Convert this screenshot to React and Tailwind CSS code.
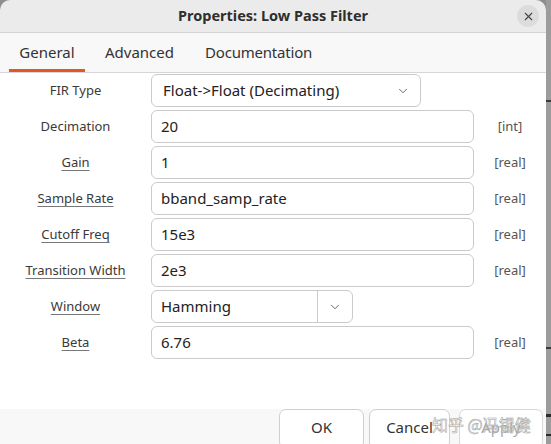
import { ChevronDown, X } from "lucide-react";

const rows = [
  { label: "FIR Type", type: "combo", value: "Float->Float (Decimating)" },
  { label: "Decimation", value: "20", unit: "[int]" },
  { label: "Gain", value: "1", unit: "[real]", u: true },
  { label: "Sample Rate", value: "bband_samp_rate", unit: "[real]", u: true },
  { label: "Cutoff Freq", value: "15e3", unit: "[real]", u: true },
  { label: "Transition Width", value: "2e3", unit: "[real]", u: true },
  { label: "Window", type: "split", value: "Hamming", u: true },
  { label: "Beta", value: "6.76", unit: "[real]", u: true },
];

function Field({ row }) {
  if (row.type === "combo") {
    return (
      <div className="w-[270px] h-[33px] border border-[#cacaca] rounded-[6px] bg-white flex items-center pl-[11px] pr-[10px]">
        <span className="flex-1 text-[15px] text-[#222]">{row.value}</span>
        <ChevronDown size={14} strokeWidth={1.5} className="text-[#555]" />
      </div>
    );
  }
  if (row.type === "split") {
    return (
      <div className="w-[202px] h-[33px] border border-[#cacaca] rounded-[6px] bg-white flex items-center">
        <span className="flex-1 pl-[9px] text-[15px] text-[#222]">{row.value}</span>
        <div className="w-[35px] h-full border-l border-[#cacaca] flex items-center justify-center">
          <ChevronDown size={14} strokeWidth={1.5} className="text-[#555]" />
        </div>
      </div>
    );
  }
  return (
    <div className="w-[323px] h-[33px] border border-[#cacaca] rounded-[6px] bg-white flex items-center pl-[9px] text-[15px] text-[#222]">
      {row.value}
    </div>
  );
}

export default function App() {
  return (
    <div className="w-[551px] h-[444px] bg-[#8e8e8e] flex overflow-hidden font-['Noto_Sans',sans-serif]">
      <div className="w-[546px] h-full flex flex-col rounded-t-[10px] overflow-hidden relative">
        {/* titlebar */}
        <div className="h-[33px] bg-[#ebebeb] border-b border-[#d4d4d4] flex items-center justify-center relative shrink-0">
          <span className="text-[14.5px] font-bold text-[#2e2e2e]">Properties: Low Pass Filter</span>
          <div className="absolute right-[7px] top-[5px] w-[22px] h-[22px] rounded-full bg-[#dcdcdc] flex items-center justify-center">
            <X size={13} strokeWidth={2} className="text-[#444]" />
          </div>
        </div>

        {/* tabs */}
        <div className="h-[40px] bg-[#f8f8f8] border-b border-[#d6d6d6] flex items-stretch shrink-0 text-[15px] text-[#333]">
          <div className="ml-[9px] w-[76px] flex items-center justify-center border-b-[3px] border-[#e2572a] pt-[3px]">General</div>
          <div className="ml-[20px] flex items-center">Advanced</div>
          <div className="ml-[31px] flex items-center tracking-[-0.2px]">Documentation</div>
        </div>

        {/* content */}
        <div className="flex-1 bg-white pt-[1px] flex flex-col gap-[3px]">
          {rows.map((row) => (
            <div key={row.label} className="flex items-center h-[33px]">
              <div className="w-[151px] text-center text-[13px] text-[#3a3a3a]">
                <span className={row.u ? "underline underline-offset-[3px] decoration-[#777]" : ""}>{row.label}</span>
              </div>
              <Field row={row} />
              {row.unit && (
                <div className="w-[72px] text-center text-[13px] text-[#555]">{row.unit}</div>
              )}
            </div>
          ))}
        </div>

        {/* footer */}
        <div className="h-[35px] bg-[#f8f8f8] shrink-0 flex items-start justify-end pr-[3px] text-[15px]">
          <div className="w-[85px] mr-[5px] h-[40px] border border-[#cfcfcf] rounded-[7px] bg-white flex items-start justify-center pt-[6px] text-[#333]">OK</div>
          <div className="w-[81px] mr-[9px] h-[40px] border border-[#cfcfcf] rounded-[7px] bg-white flex items-start justify-center pt-[6px] text-[#333]">Cancel</div>
          <div className="w-[84px] h-[40px] border border-[#d8d8d8] rounded-[7px] bg-white flex items-start justify-center pt-[6px] text-[#a8a8a8]">Apply</div>
        </div>

        <div className="absolute left-[432px] top-[412px] whitespace-nowrap text-[16px] text-white/60 [-webkit-text-stroke:0.5px_#9a9a9a] font-['Noto_Sans_CJK_SC',sans-serif]">
          知乎 @冯锡健
        </div>
      </div>

      {/* background strip */}
      <div className="flex-1 flex flex-col bg-[#9c9c9c]">
        <div className="h-[100px]" />
        <div className="h-[2px] bg-[#3a3a3a]" />
        <div className="h-[245px]" />
        <div className="h-[2px] bg-[#3a3a3a]" />
        <div className="h-[65px]" />
        <div className="h-[3px] bg-[#2a2a2a]" />
        <div className="h-[17px]" />
        <div className="h-[2px] bg-[#2a2a2a]" />
      </div>
    </div>
  );
}
